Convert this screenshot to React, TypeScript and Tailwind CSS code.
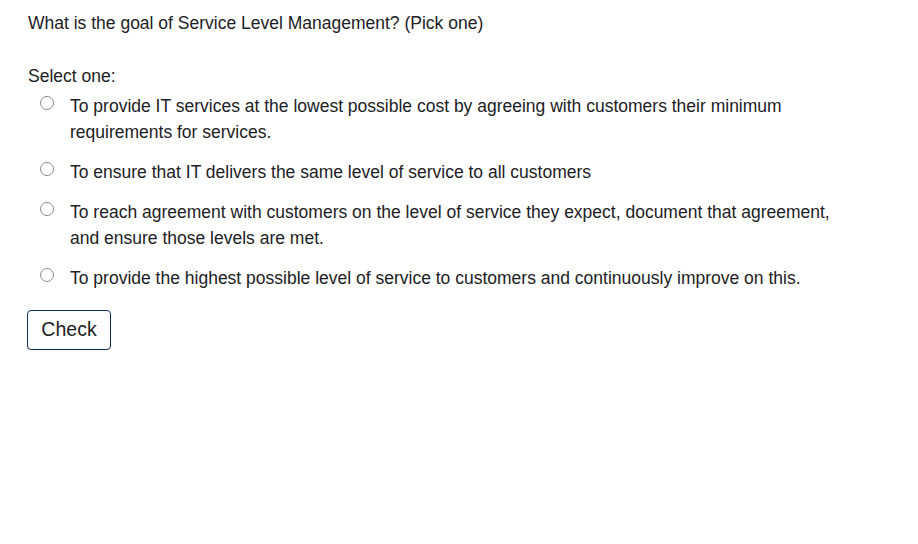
import React from "react";

const options = [
  "To provide IT services at the lowest possible cost by agreeing with customers their minimum requirements for services.",
  "To ensure that IT delivers the same level of service to all customers",
  "To reach agreement with customers on the level of service they expect, document that agreement, and ensure those levels are met.",
  "To provide the highest possible level of service to customers and continuously improve on this.",
];

export default function App() {
  return (
    <div
      className="min-h-screen bg-white text-[#1d2125] text-[17.5px]"
      style={{ fontFamily: '"Liberation Sans", Arial, sans-serif' }}
    >
      <div className="pl-[28px] pt-[12px] pr-[60px]">
        <p className="leading-[22px]">What is the goal of Service Level Management? (Pick one)</p>

        <p className="mt-[31px] leading-[22px]">Select one:</p>

        <div className="mt-[6px] flex flex-col gap-[14px]">
          {options.map((opt, i) => (
            <label key={i} className="flex items-start">
              <span className="w-[42px] shrink-0 flex pl-[12px] pt-[3px]">
                <span className="block w-[14px] h-[14px] rounded-full border-[1.5px] border-[#8a8a8a] bg-white" />
              </span>
              <span className="leading-[26px] max-w-[775px]">{opt}</span>
            </label>
          ))}
        </div>

        <button
          type="button"
          className="mt-[19px] h-[40px] w-[84px] -ml-[1px] rounded-[4px] border border-[#0f2d5c] bg-white text-[19.5px] text-[#1d2125]"
        >
          Check
        </button>
      </div>
    </div>
  );
}
